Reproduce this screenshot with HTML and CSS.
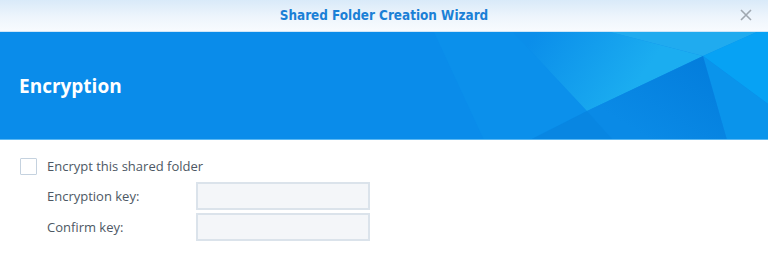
FILE: index.html
```html
<!DOCTYPE html>
<html>
<head>
<meta charset="utf-8">
<link rel="stylesheet" href="styles.css">
</head>
<body>
<div class="window">
  <div class="titlebar">
    <span class="title">Shared Folder Creation Wizard</span>
    <svg class="close" width="12" height="12" viewBox="0 0 12 12"><path d="M1 1 L11 11 M11 1 L1 11" stroke="#a0a8b0" stroke-width="1.6" fill="none"/></svg>
  </div>
  <div class="banner">
    <svg class="banner-art" width="768" height="108" viewBox="0 31 768 108" preserveAspectRatio="none">
      <defs>
        <linearGradient id="gA" x1="530" y1="40" x2="620" y2="105" gradientUnits="userSpaceOnUse">
          <stop offset="0" stop-color="#0b8eea"/>
          <stop offset="1" stop-color="#1badf0"/>
        </linearGradient>
        <linearGradient id="gD" x1="703" y1="55" x2="650" y2="139" gradientUnits="userSpaceOnUse">
          <stop offset="0" stop-color="#037ddc"/>
          <stop offset="1" stop-color="#0a8ae6"/>
        </linearGradient>
      </defs>
      <rect x="0" y="31" width="768" height="108" fill="#0a8cea"/>
      <polygon points="434,31 513,31 587,110 530,139 484,139" fill="#0b90eb"/>
      <polygon points="513,31 610,31 703,55 587,110" fill="url(#gA)"/>
      <polygon points="610,31 757,31 703,55" fill="#20abef"/>
      <polygon points="757,31 768,31 768,103 703,55" fill="#07a2f4"/>
      <polygon points="703,55 768,103 768,139 727,139" fill="#0a94eb"/>
      <polygon points="703,55 727,139 613,139 587,110" fill="url(#gD)"/>
      <polygon points="587,110 613,139 530,139" fill="#0886e2"/>
    </svg>
    <h1 class="heading">Encryption</h1>
  </div>
  <div class="content">
    <label class="check-row">
      <span class="checkbox"></span>
      <span class="check-text">Encrypt this shared folder</span>
    </label>
    <div class="fields">
      <div class="field">
        <span class="field-label">Encryption key:</span>
        <span class="input"></span>
      </div>
      <div class="field">
        <span class="field-label">Confirm key:</span>
        <span class="input"></span>
      </div>
    </div>
  </div>
</div>
</body>
</html>
```
FILE: styles.css
```css
html, body {
  margin: 0;
  padding: 0;
  background: #ffffff;
}
.window {
  width: 768px;
  height: 275px;
  overflow: hidden;
  font-family: "Open Sans", "DejaVu Sans", sans-serif;
}
.titlebar {
  position: relative;
  height: 31px;
  border-bottom: 1px solid #cfe6f8;
  background: linear-gradient(to bottom, #d9eaf9 0%, #eef5fc 55%, #f8fbfe 100%);
  display: flex;
  align-items: center;
  justify-content: center;
}
.title {
  font-family: "DejaVu Sans Condensed", "DejaVu Sans", sans-serif;
  font-weight: bold;
  font-size: 13.4px;
  color: #1b80d6;
  white-space: nowrap;
}
.close {
  position: absolute;
  right: 16px;
  top: 9px;
}
.banner {
  position: relative;
  height: 107px;
  border-bottom: 1px solid #5bb8f3;
  display: flex;
  align-items: center;
  overflow: hidden;
}
.banner-art {
  position: absolute;
  left: 0;
  top: 0;
  width: 768px;
  height: 108px;
}
.heading {
  position: relative;
  margin: 0 0 0 19px;
  font-size: 19px;
  font-weight: bold;
  color: #ffffff;
}
.content {
  padding: 17px 0 0 20px;
  color: #4d5864;
  font-size: 13px;
}
.check-row {
  display: flex;
  align-items: center;
  gap: 10px;
  height: 18px;
}
.checkbox {
  width: 15px;
  height: 15px;
  border: 1px solid #c5d2df;
  border-radius: 1px;
  background: #fff;
}
.fields {
  margin-top: 7px;
  padding-left: 27px;
  display: flex;
  flex-direction: column;
  gap: 3px;
}
.field {
  display: flex;
  align-items: center;
}
.field-label {
  width: 149px;
}
.input {
  width: 170px;
  height: 24px;
  border: 2px solid #dbe3eb;
  background: #f4f6f9;
  box-sizing: content-box;
}
```
